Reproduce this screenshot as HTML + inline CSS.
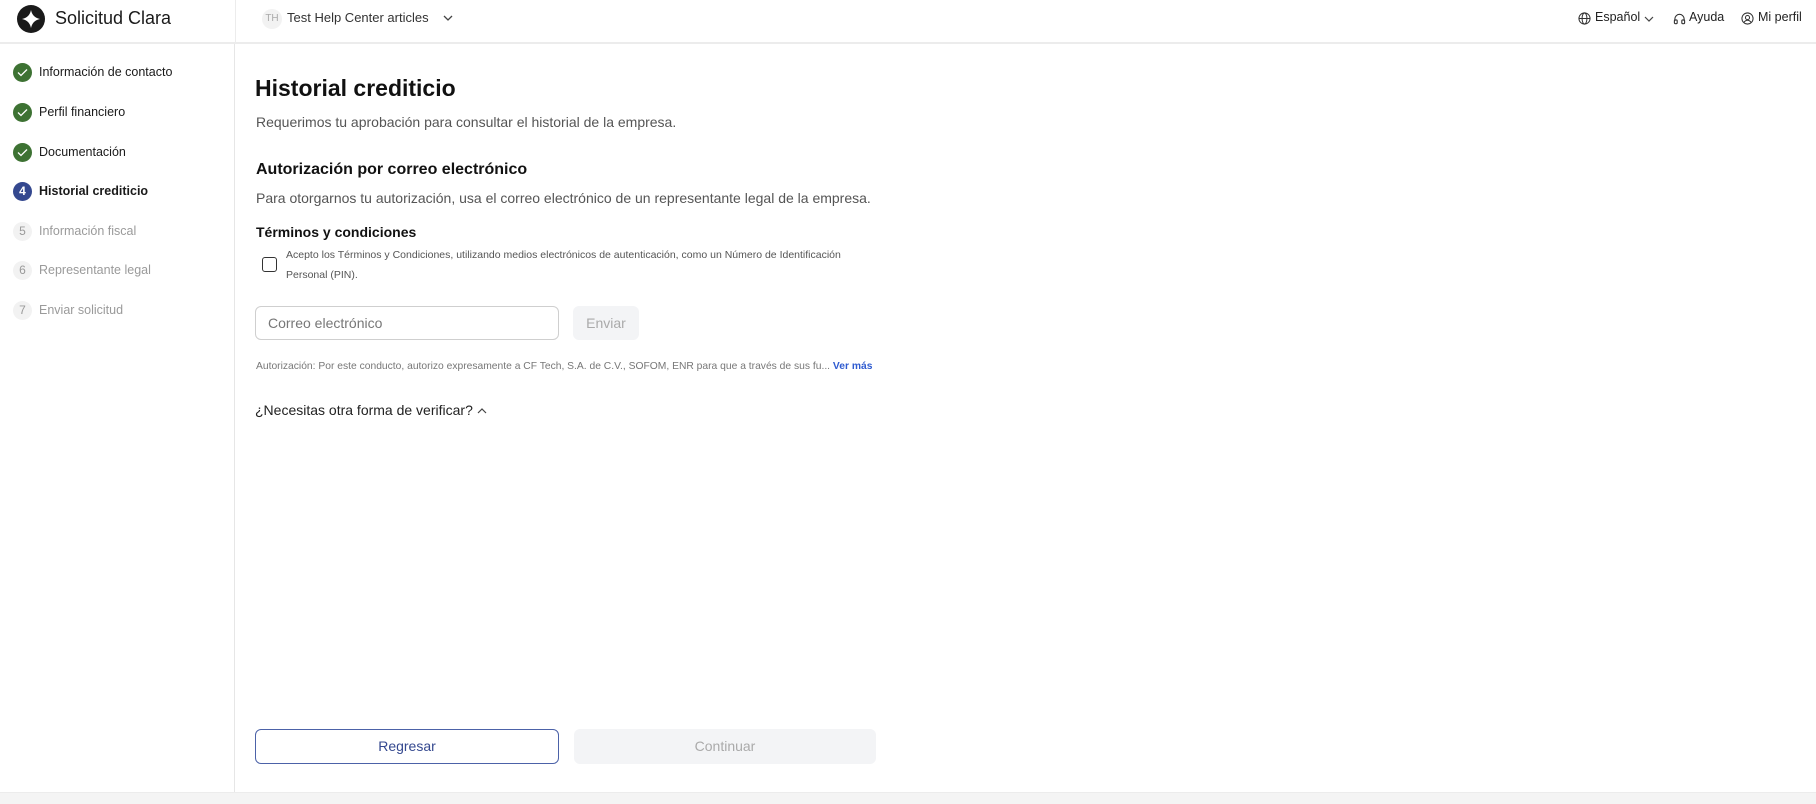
<!DOCTYPE html>
<html><head><meta charset="utf-8"><style>
*{box-sizing:border-box;margin:0;padding:0}
body{width:1816px;height:804px;background:#fff;font-family:"Liberation Sans",sans-serif;color:#1a1a1a;position:relative;overflow:hidden}
.abs{position:absolute;white-space:nowrap}
.hdr{position:absolute;left:0;top:0;width:1816px;height:44px;border-bottom:2px solid #ececec}
.side{position:absolute;left:0;top:44px;width:235px;height:748px;border-right:1px solid #e6e6e6}
.foot{position:absolute;left:0;top:792px;width:1816px;height:12px;background:#f4f4f4;border-top:1px solid #ececec}
.step{position:absolute;left:13px;height:20px;display:flex;align-items:center;font-size:12.5px}
.step .c{width:19px;height:19px;border-radius:50%;margin-right:7px;display:flex;align-items:center;justify-content:center;font-size:12px}
.done .c{background:#3d7233}
.cur .c{background:#34488f;color:#fff}
.cur{font-weight:bold}
.todo{color:#9a9a9a}
.todo .c{background:#f2f2f2;color:#999}
</style></head><body>
<div class="hdr"></div>
<div class="abs" style="left:235px;top:0;width:1px;height:44px;background:#ececec"></div>
<svg class="abs" style="left:17px;top:5px" width="28" height="28" viewBox="0 0 28 28"><circle cx="14" cy="14" r="14" fill="#1a1a1a"/><path d="M14 5 Q15.5 12.5 23 14 Q15.5 15.5 14 23 Q12.5 15.5 5 14 Q12.5 12.5 14 5Z" fill="#fff"/></svg>
<div class="abs" style="left:55px;top:8px;font-size:18px;font-weight:500">Solicitud Clara</div>
<div class="abs" style="left:262px;top:9px;width:20px;height:20px;border-radius:50%;background:#f2f2f2;color:#aaa;font-size:10px;text-align:center;line-height:20px">TH</div>
<div class="abs" style="left:287px;top:10px;font-size:13px;color:#333">Test Help Center articles</div>
<svg class="abs" style="left:443px;top:14px" width="10" height="8" viewBox="0 0 10 8"><path d="M1 2 L5 6 L9 2" stroke="#444" stroke-width="1.3" fill="none"/></svg>
<svg class="abs" style="left:1578px;top:12px" width="13" height="13" viewBox="0 0 14 14" fill="none" stroke="#333" stroke-width="1.1"><circle cx="7" cy="7" r="6"/><ellipse cx="7" cy="7" rx="2.6" ry="6"/><path d="M1 7h12"/></svg>
<div class="abs" style="left:1595px;top:10px;font-size:12.5px;color:#222">Español</div>
<svg class="abs" style="left:1644px;top:15px" width="10" height="8" viewBox="0 0 10 8"><path d="M1 2 L5 6 L9 2" stroke="#444" stroke-width="1.2" fill="none"/></svg>
<svg class="abs" style="left:1673px;top:12px" width="13" height="14" viewBox="0 0 14 14" fill="none" stroke="#333" stroke-width="1.2"><path d="M2 9V7a5 5 0 0 1 10 0v2"/><rect x="1.5" y="8" width="3" height="4" rx="1"/><rect x="9.5" y="8" width="3" height="4" rx="1"/></svg>
<div class="abs" style="left:1689px;top:10px;font-size:12.5px;color:#222">Ayuda</div>
<svg class="abs" style="left:1741px;top:12px" width="13" height="13" viewBox="0 0 14 14" fill="none" stroke="#333" stroke-width="1.1"><circle cx="7" cy="7" r="6"/><circle cx="7" cy="6" r="2.2"/><path d="M3.2 11.2c1-1.6 2.3-2.3 3.8-2.3s2.8.7 3.8 2.3"/></svg>
<div class="abs" style="left:1758px;top:10px;font-size:12.5px;color:#222">Mi perfil</div>

<div class="side"></div>
<div class="step done" style="top:62px"><span class="c"><svg width="11" height="9" viewBox="0 0 11 9"><path d="M1 4.5 L4 7.5 L10 1.5" stroke="#fff" stroke-width="1.3" fill="none"/></svg></span>Información de contacto</div>
<div class="step done" style="top:102px"><span class="c"><svg width="11" height="9" viewBox="0 0 11 9"><path d="M1 4.5 L4 7.5 L10 1.5" stroke="#fff" stroke-width="1.3" fill="none"/></svg></span>Perfil financiero</div>
<div class="step done" style="top:142px"><span class="c"><svg width="11" height="9" viewBox="0 0 11 9"><path d="M1 4.5 L4 7.5 L10 1.5" stroke="#fff" stroke-width="1.3" fill="none"/></svg></span>Documentación</div>
<div class="step cur" style="top:181px"><span class="c">4</span>Historial crediticio</div>
<div class="step todo" style="top:221px"><span class="c">5</span>Información fiscal</div>
<div class="step todo" style="top:260px"><span class="c">6</span>Representante legal</div>
<div class="step todo" style="top:300px"><span class="c">7</span>Enviar solicitud</div>

<div class="abs" style="left:255px;top:75px;font-size:23px;font-weight:bold;color:#111">Historial crediticio</div>
<div class="abs" style="left:256px;top:114px;font-size:14px;color:#555">Requerimos tu aprobación para consultar el historial de la empresa.</div>
<div class="abs" style="left:256px;top:161px;font-size:16px;font-weight:bold;color:#111">Autorización por correo electrónico</div>
<div class="abs" style="left:256px;top:190px;font-size:14px;color:#555">Para otorgarnos tu autorización, usa el correo electrónico de un representante legal de la empresa.</div>
<div class="abs" style="left:256px;top:224px;font-size:14px;font-weight:bold;color:#111">Términos y condiciones</div>
<div class="abs" style="left:262px;top:257px;width:15px;height:15px;border:1.5px solid #333;border-radius:3px"></div>
<div class="abs" style="left:286px;top:245px;font-size:10.5px;color:#555;line-height:20px">Acepto los Términos y Condiciones, utilizando medios electrónicos de autenticación, como un Número de Identificación<br>Personal (PIN).</div>
<div class="abs" style="left:255px;top:306px;width:304px;height:34px;border:1px solid #cfcfcf;border-radius:6px;font-size:14px;color:#777;padding:8px 12px">Correo electrónico</div>
<div class="abs" style="left:573px;top:306px;width:66px;height:34px;border-radius:6px;background:#f3f4f6;font-size:14px;color:#aaa;text-align:center;line-height:34px">Enviar</div>
<div class="abs" style="left:256px;top:361px;font-size:10.3px;color:#777">Autorización: Por este conducto, autorizo expresamente a CF Tech, S.A. de C.V., SOFOM, ENR para que a través de sus fu... <span style="color:#2f5bd0;font-weight:bold">Ver más</span></div>
<div class="abs" style="left:255px;top:402px;font-size:14px;color:#222">¿Necesitas otra forma de verificar? <svg width="10" height="8" viewBox="0 0 10 8"><path d="M1 6 L5 2 L9 6" stroke="#444" stroke-width="1.2" fill="none"/></svg></div>

<div class="abs" style="left:255px;top:729px;width:304px;height:35px;border:1.5px solid #4c62a8;border-radius:6px;font-size:14px;color:#34488f;text-align:center;line-height:32px">Regresar</div>
<div class="abs" style="left:574px;top:729px;width:302px;height:35px;border-radius:6px;background:#f3f4f6;font-size:14px;color:#aaa;text-align:center;line-height:35px">Continuar</div>
<div class="foot"></div>
</body></html>
